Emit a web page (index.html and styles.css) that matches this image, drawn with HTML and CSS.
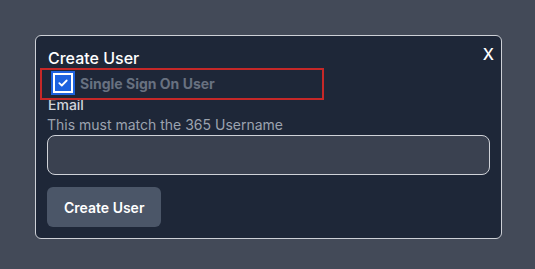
FILE: index.html
```html
<!DOCTYPE html>
<html>
<head>
<meta charset="utf-8">
<link rel="stylesheet" href="styles.css">
</head>
<body>
<div class="modal">
  <button class="close">X</button>
  <h2 class="title">Create User</h2>
  <label class="sso">
    <span class="checkbox">
      <span class="checkbox-inner">
        <svg width="10" height="8" viewBox="0 0 10 8"><path d="M1.3 4.2 L3.8 6.5 L8.7 1.5" fill="none" stroke="#fff" stroke-width="1.8" stroke-linecap="round" stroke-linejoin="round"/></svg>
      </span>
    </span>
    <span class="sso-label">Single Sign On User</span>
  </label>
  <div class="field-label">Email</div>
  <div class="help">This must match the 365 Username</div>
  <input class="input" type="text">
  <button class="submit">Create User</button>
</div>
</body>
</html>
```

FILE: styles.css
```css
html, body {
  margin: 0;
  padding: 0;
}
body {
  background: #434a58;
  width: 535px;
  height: 269px;
  overflow: hidden;
  font-family: Inter, "Liberation Sans", sans-serif;
  padding-top: 35px;
  box-sizing: border-box;
}
.modal {
  position: relative;
  margin-left: 35px;
  width: 467px;
  height: 204px;
  box-sizing: border-box;
  background: #1e2738;
  border: 1px solid #cdd0d6;
  border-radius: 6px;
  padding: 12px 12px 0 11px;
  display: flex;
  flex-direction: column;
  align-items: flex-start;
}
.close {
  position: absolute;
  top: 8px;
  right: 7px;
  background: none;
  border: none;
  padding: 0;
  color: #ffffff;
  font-family: Inter, "Liberation Sans", sans-serif;
  font-size: 16px;
  line-height: 20px;
  font-weight: 500;
}
.title {
  margin: 0 0 0 1px;
  font-size: 16px;
  line-height: 20px;
  font-weight: 450;
  color: #ffffff;
}
.sso {
  position: relative;
  margin-top: 3px;
  display: flex;
  align-items: center;
  height: 24px;
  padding-left: 4px;
}
.sso::after {
  content: "";
  position: absolute;
  top: -3px;
  bottom: -5px;
  left: -7px;
  width: 284px;
  box-sizing: border-box;
  border: 2px solid #c62828;
}
.checkbox {
  width: 24px;
  height: 24px;
  box-sizing: border-box;
  background: #1d62df;
  padding: 2px;
}
.checkbox-inner {
  display: flex;
  align-items: center;
  justify-content: center;
  width: 20px;
  height: 20px;
  box-sizing: border-box;
  border: 2px solid #ffffff;
  background: #1d62df;
}
.sso-label {
  margin-left: 5px;
  font-size: 14px;
  font-weight: 700;
  color: #687180;
}
.field-label {
  margin-left: 1px;
  font-size: 14px;
  line-height: 20px;
  font-weight: 500;
  color: #d1d5db;
}
.help {
  font-size: 14px;
  line-height: 20px;
  color: #9ca3af;
}
.input {
  margin-top: 0;
  width: 443px;
  height: 40px;
  box-sizing: border-box;
  background: #3a4150;
  border: 1px solid #cfd2d8;
  border-radius: 8px;
  outline: none;
}
.submit {
  margin-top: 12px;
  height: 40px;
  padding: 0 17px;
  background: #4b5668;
  border: none;
  border-radius: 6px;
  color: #ffffff;
  font-family: Inter, "Liberation Sans", sans-serif;
  font-size: 14px;
  font-weight: 600;
}
```
